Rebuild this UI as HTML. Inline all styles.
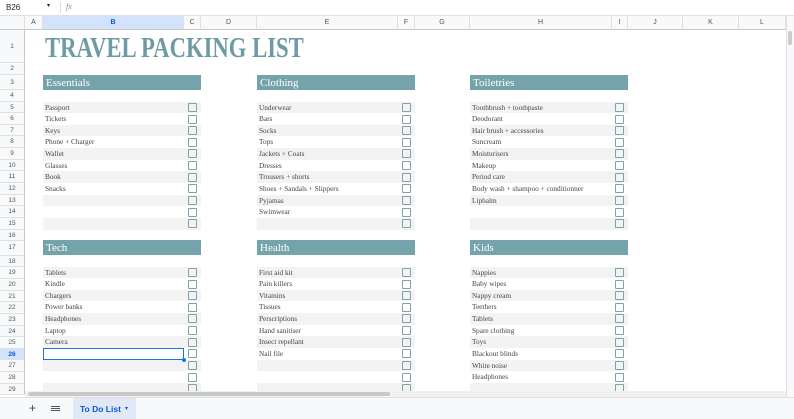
<!DOCTYPE html>
<html><head><meta charset="utf-8"><style>
*{margin:0;padding:0;box-sizing:border-box}
body{width:794px;height:419px;overflow:hidden;background:#fff;font-family:"Liberation Sans",sans-serif;position:relative}
.a{position:absolute}
.fb{left:0;top:0;width:794px;height:16px;background:#fff;border-bottom:1px solid #e0e0e0;font-size:8px;color:#222}
.ch{top:16px;height:14px;background:#f8f9fa;border-bottom:1px solid #c7c7c7;border-right:1px solid #e0e0e0;font-size:7px;color:#555;text-align:center;line-height:14px}
.rn{left:0;width:25px;background:#f8f9fa;border-right:1px solid #c7c7c7;border-bottom:1px solid #e0e0e0;font-size:6.5px;color:#555;text-align:center}
.hd{height:15px;background:#75a3ab;color:#fff;font-family:"Liberation Serif",serif;font-size:11px;line-height:16px;padding-left:3px;width:158px}
.sec{width:158px}
.r{height:11.65px;position:relative;font-family:"Liberation Serif",serif;font-size:7.3px;color:#444;line-height:12px;padding-left:2px}
.r:nth-child(odd){background:#f3f3f3}
.r i{position:absolute;left:145px;top:1.4px;width:9px;height:9px;border:1px solid #7fa2a8;border-radius:1px}
.title{left:45px;top:33px;font-family:"Liberation Serif",serif;font-weight:bold;font-size:28px;color:#6e9ba3;transform:scaleX(0.81);transform-origin:left top;white-space:nowrap}
</style></head><body>
<div class="a fb"><span class="a" style="left:6px;top:3px">B26</span><span class="a" style="left:47px;top:2px;font-size:6px">▾</span><span class="a" style="left:60px;top:2px;width:1px;height:11px;background:#ddd"></span><span class="a" style="left:66px;top:2px;font-style:italic;color:#888;font-family:'Liberation Serif',serif">fx</span></div>
<div class="a ch" style="left:0;width:25px"></div>
<div class="a ch" style="left:25px;width:18px">A</div>
<div class="a ch" style="left:43px;width:141px;background:#d3e3fd;font-weight:bold;color:#0b57d0">B</div>
<div class="a ch" style="left:184px;width:17px">C</div>
<div class="a ch" style="left:201px;width:56px">D</div>
<div class="a ch" style="left:257px;width:141px">E</div>
<div class="a ch" style="left:398px;width:17px">F</div>
<div class="a ch" style="left:415px;width:55px">G</div>
<div class="a ch" style="left:470px;width:142px">H</div>
<div class="a ch" style="left:612px;width:16px">I</div>
<div class="a ch" style="left:628px;width:55px">J</div>
<div class="a ch" style="left:683px;width:56px">K</div>
<div class="a ch" style="left:739px;width:47px">L</div>
<div class="a" style="left:786px;top:16px;width:8px;height:381px;background:#f8f9fa;border-left:1px solid #e0e0e0"></div>
<div class="a" style="left:788px;top:31px;width:4px;height:14px;background:#ccc;border-radius:2px"></div>
<div class="a rn" style="top:30px;height:33px;line-height:33px">1</div>
<div class="a rn" style="top:63px;height:12px;line-height:12px">2</div>
<div class="a rn" style="top:75px;height:15px;line-height:15px">3</div>
<div class="a rn" style="top:90px;height:11.5px;line-height:11.5px">4</div>
<div class="a" style="left:0;top:101.5px">
<div class="rn" style="position:relative;height:11.65px;line-height:11.65px">5</div><div class="rn" style="position:relative;height:11.65px;line-height:11.65px">6</div><div class="rn" style="position:relative;height:11.65px;line-height:11.65px">7</div><div class="rn" style="position:relative;height:11.65px;line-height:11.65px">8</div><div class="rn" style="position:relative;height:11.65px;line-height:11.65px">9</div><div class="rn" style="position:relative;height:11.65px;line-height:11.65px">10</div><div class="rn" style="position:relative;height:11.65px;line-height:11.65px">11</div><div class="rn" style="position:relative;height:11.65px;line-height:11.65px">12</div><div class="rn" style="position:relative;height:11.65px;line-height:11.65px">13</div><div class="rn" style="position:relative;height:11.65px;line-height:11.65px">14</div><div class="rn" style="position:relative;height:11.65px;line-height:11.65px">15</div><div class="rn" style="position:relative;height:11.65px;line-height:11.65px">16</div><div class="rn" style="position:relative;height:14.5px;line-height:14.5px">17</div><div class="rn" style="position:relative;height:11.65px;line-height:11.65px">18</div><div class="rn" style="position:relative;height:11.65px;line-height:11.65px">19</div><div class="rn" style="position:relative;height:11.65px;line-height:11.65px">20</div><div class="rn" style="position:relative;height:11.65px;line-height:11.65px">21</div><div class="rn" style="position:relative;height:11.65px;line-height:11.65px">22</div><div class="rn" style="position:relative;height:11.65px;line-height:11.65px">23</div><div class="rn" style="position:relative;height:11.65px;line-height:11.65px">24</div><div class="rn" style="position:relative;height:11.65px;line-height:11.65px">25</div><div class="rn" style="position:relative;height:11.65px;line-height:11.65px;background:#d3e3fd;color:#0b57d0;font-weight:bold">26</div><div class="rn" style="position:relative;height:11.65px;line-height:11.65px">27</div><div class="rn" style="position:relative;height:11.65px;line-height:11.65px">28</div><div class="rn" style="position:relative;height:11.65px;line-height:11.65px">29</div>
</div>
<div class="a title">TRAVEL PACKING LIST</div>

<div class="a hd" style="left:43px;top:75px">Essentials</div>
<div class="a hd" style="left:257px;top:75px">Clothing</div>
<div class="a hd" style="left:470px;top:75px">Toiletries</div>
<div class="a hd" style="left:43px;top:240px">Tech</div>
<div class="a hd" style="left:257px;top:240px">Health</div>
<div class="a hd" style="left:470px;top:240px">Kids</div>

<div class="a sec" style="left:43px;top:101.5px"><div class="r">Passport<i></i></div><div class="r">Tickets<i></i></div><div class="r">Keys<i></i></div><div class="r">Phone + Charger<i></i></div><div class="r">Wallet<i></i></div><div class="r">Glasses<i></i></div><div class="r">Book<i></i></div><div class="r">Snacks<i></i></div><div class="r"><i></i></div><div class="r"><i></i></div><div class="r"><i></i></div></div>
<div class="a sec" style="left:257px;top:101.5px"><div class="r">Underwear<i></i></div><div class="r">Bars<i></i></div><div class="r">Socks<i></i></div><div class="r">Tops<i></i></div><div class="r">Jackets + Coats<i></i></div><div class="r">Dresses<i></i></div><div class="r">Trousers + shorts<i></i></div><div class="r">Shoes + Sandals + Slippers<i></i></div><div class="r">Pyjamas<i></i></div><div class="r">Swimwear<i></i></div><div class="r"><i></i></div></div>
<div class="a sec" style="left:470px;top:101.5px"><div class="r">Toothbrush + toothpaste<i></i></div><div class="r">Deodorant<i></i></div><div class="r">Hair brush + accessories<i></i></div><div class="r">Suncream<i></i></div><div class="r">Moisturisers<i></i></div><div class="r">Makeup<i></i></div><div class="r">Period care<i></i></div><div class="r">Body wash + shampoo + conditionner<i></i></div><div class="r">Lipbalm<i></i></div><div class="r"><i></i></div><div class="r"><i></i></div></div>

<div class="a sec" style="left:43px;top:266.5px"><div class="r">Tablets<i></i></div><div class="r">Kindle<i></i></div><div class="r">Chargers<i></i></div><div class="r">Power banks<i></i></div><div class="r">Headphones<i></i></div><div class="r">Laptop<i></i></div><div class="r">Camera<i></i></div><div class="r"><i></i></div><div class="r"><i></i></div><div class="r"><i></i></div><div class="r"><i></i></div></div>
<div class="a sec" style="left:257px;top:266.5px"><div class="r">First aid kit<i></i></div><div class="r">Pain killers<i></i></div><div class="r">Vitamins<i></i></div><div class="r">Tissues<i></i></div><div class="r">Perscriptions<i></i></div><div class="r">Hand sanitiser<i></i></div><div class="r">Insect repellant<i></i></div><div class="r">Nail file<i></i></div><div class="r"><i></i></div><div class="r"><i></i></div><div class="r"><i></i></div></div>
<div class="a sec" style="left:470px;top:266.5px"><div class="r">Nappies<i></i></div><div class="r">Baby wipes<i></i></div><div class="r">Nappy cream<i></i></div><div class="r">Teethers<i></i></div><div class="r">Tablets<i></i></div><div class="r">Spare clothing<i></i></div><div class="r">Toys<i></i></div><div class="r">Blackout blinds<i></i></div><div class="r">White noise<i></i></div><div class="r">Headphones<i></i></div><div class="r"><i></i></div></div>

<div class="a" style="left:43px;top:348px;width:141px;height:12px;border:1.5px solid #1a73e8;background:#fff"></div>
<div class="a" style="left:182px;top:358px;width:4px;height:4px;border-radius:50%;background:#1a73e8"></div>

<div class="a" style="left:25px;top:391px;width:761px;height:6px;background:#f1f1f1"></div>
<div class="a" style="left:28px;top:392px;width:362px;height:4px;background:#c8c8c8;border-radius:2px"></div>
<div class="a" style="left:0;top:397px;width:794px;height:22px;background:#f8f9fa;border-top:1px solid #e0e0e0"></div>
<div class="a" style="left:29px;top:401px;font-size:12px;color:#444">+</div>
<div class="a" style="left:51px;top:406px;width:9px;height:1px;background:#555;box-shadow:0 2px 0 #555,0 4px 0 #555"></div>
<div class="a" style="left:73px;top:398px;width:63px;height:21px;background:#e1e9f7"></div>
<div class="a" style="left:80px;top:404px;font-size:8.5px;font-weight:bold;color:#0b57d0">To Do List</div>
<div class="a" style="left:125px;top:405px;font-size:6px;color:#0b57d0">▾</div>
</body></html>
